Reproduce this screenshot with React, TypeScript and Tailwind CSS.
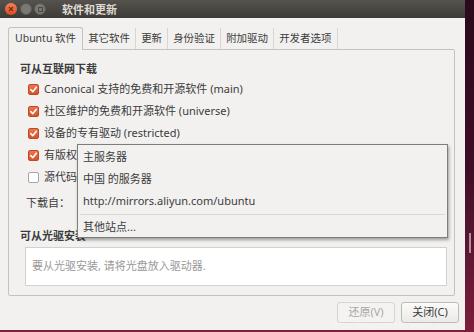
import React from 'react';

const font = { fontFamily: '"Noto Sans", "Noto Sans CJK SC", sans-serif' };

const tabs = ['Ubuntu 软件', '其它软件', '更新', '身份验证', '附加驱动', '开发者选项'];

const sources = [
  { label: 'Canonical 支持的免费和开源软件 (main)', checked: true },
  { label: '社区维护的免费和开源软件 (universe)', checked: true },
  { label: '设备的专有驱动 (restricted)', checked: true },
  { label: '有版权', checked: true },
  { label: '源代码', checked: false },
];

const CheckBox: React.FC<{ checked: boolean }> = ({ checked }) =>
  checked ? (
    <span className="w-[11px] h-[11px] rounded-[2px] bg-gradient-to-b from-[#ea7550] to-[#d6532b] border border-[#c2491f] flex items-center justify-center shrink-0">
      <svg width="9" height="9" viewBox="0 0 10 10">
        <path d="M2 5.2 L4.2 7.4 L8.2 2.6" fill="none" stroke="white" strokeWidth="1.8" strokeLinecap="round" strokeLinejoin="round" />
      </svg>
    </span>
  ) : (
    <span className="w-[11px] h-[11px] rounded-[2px] bg-white border border-[#a8a6a2] shrink-0" />
  );

const App: React.FC = () => {
  return (
    <div className="w-[474px] h-[332px] relative overflow-hidden bg-gradient-to-b from-[#2a0a1c] via-[#3e0e26] to-[#7c1f3c]" style={font}>
      {/* desktop sliver */}
      <div className="absolute left-[469px] top-[233px] w-[2px] h-[20px] bg-[#d9c8cf]/70" />

      <div className="w-[465px] h-[330px] flex flex-col bg-[#f2f1f0]">
        {/* title bar */}
        <div className="h-[18px] flex items-center bg-gradient-to-b from-[#56534e] to-[#3c3b37] px-[5px] gap-[2px] shrink-0">
          <span className="w-[12px] h-[12px] rounded-full bg-gradient-to-b from-[#f2825a] to-[#df4a16] flex items-center justify-center">
            <svg width="6" height="6" viewBox="0 0 6 6">
              <path d="M1 1 L5 5 M5 1 L1 5" stroke="#7a2a10" strokeWidth="1.2" />
            </svg>
          </span>
          <span className="w-[12px] h-[12px] rounded-full bg-[#7a7873] border border-[#5a5853] ml-[1px]" />
          <span className="w-[12px] h-[12px] rounded-full bg-[#7a7873] border border-[#5a5853] flex items-center justify-center">
            <span className="w-[5px] h-[5px] border border-[#4a4843]" />
          </span>
          <span className="ml-[14px] text-[11px] font-bold text-[#dfdbd2] leading-none">软件和更新</span>
        </div>

        {/* body */}
        <div className="flex-1 flex flex-col pl-[8px] pr-[10px] pt-[8px]">
          {/* tabs */}
          <div className="flex items-end h-[23px] text-[10.5px] text-[#3c3c3c]">
            {tabs.map((t, i) =>
              i === 0 ? (
                <div key={t} className="h-[23px] px-[6px] flex items-center border border-b-0 border-[#c4c2bd] rounded-t-[3px] bg-[#f2f1f0] relative top-[1px] z-10">
                  {t}
                </div>
              ) : (
                <div key={t} className="h-[21px] px-[5px] flex items-center border-r border-[#d8d6d2]">
                  {t}
                </div>
              )
            )}
          </div>

          {/* pane */}
          <div className="h-[247px] border border-[#c4c2bd] rounded-[2px] flex flex-col px-[11px] pt-[11px] text-[11px] text-[#3c3c3c]">
            <div className="font-bold h-[15px] leading-[15px]">可从互联网下载</div>
            <div className="flex flex-col pl-[8px] pt-[2px]">
              {sources.map((s) => (
                <div key={s.label} className="h-[22px] flex items-center gap-[5px]">
                  <CheckBox checked={s.checked} />
                  <span>{s.label}</span>
                </div>
              ))}
            </div>
            <div className="h-[22px] mt-[4px] flex items-center pl-[6px]">下载自：</div>
            <div className="font-bold h-[15px] leading-[15px] mt-[14px]">可从光驱安装</div>
            <div className="mt-[4px] ml-[5px] mr-[-4px] h-[39px] bg-white border border-[#d3d1cd] flex items-center px-[6px] text-[#9a9896]">
              要从光驱安装, 请将光盘放入驱动器.
            </div>
          </div>

          {/* buttons */}
          <div className="flex justify-end gap-[6px] mt-[6px] mr-[-4px] text-[11px]">
            <div className="w-[58px] h-[21px] rounded-[3px] border border-[#d6d4d0] bg-[#f4f3f2] text-[#a9a7a4] flex items-center justify-center">还原(V)</div>
            <div className="w-[58px] h-[21px] rounded-[3px] border border-[#bdbbb6] bg-gradient-to-b from-[#fbfbfa] to-[#ebeae8] text-[#3c3c3c] flex items-center justify-center">关闭(C)</div>
          </div>
        </div>
      </div>

      {/* watermark */}
      <div className="absolute left-[332px] top-[321px] text-[8px] leading-none text-white/35 tracking-tight">https://blog.csdn.net/weixin_u</div>

      {/* dropdown popup */}
      <div className="absolute left-[77px] top-[144px] w-[371px] h-[94px] bg-[#f2f1f0] border border-[#7f7d79] shadow-[1px_2px_3px_rgba(0,0,0,0.35)] flex flex-col text-[11px] text-[#3c3c3c]">
        <div className="h-[23px] flex items-center pl-[5px] pt-[1px]">主服务器</div>
        <div className="h-[23px] flex items-center pl-[5px]">中国 的服务器</div>
        <div className="h-[21px] flex items-center pl-[5px]">http://mirrors.aliyun.com/ubuntu</div>
        <div className="mx-[2px] my-[2px] h-px bg-[#dcdad6]" />
        <div className="flex-1 flex items-center pl-[5px]">其他站点...</div>
      </div>
    </div>
  );
};

export default App;
